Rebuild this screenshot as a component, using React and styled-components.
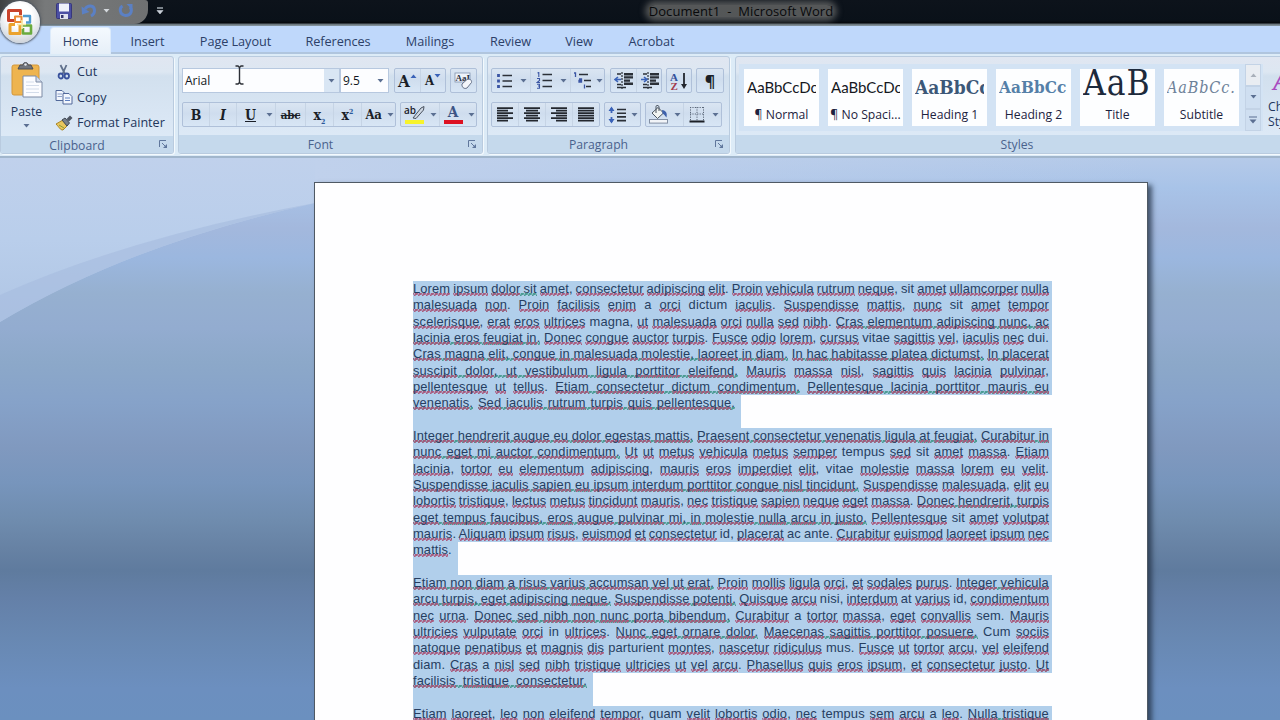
import React from 'react';
import styled, { createGlobalStyle, css } from 'styled-components';

const GlobalStyle = createGlobalStyle`
  * {
    box-sizing: border-box;
  }

  body {
    margin: 0;
    overflow: hidden;
    font-family: "Open Sans", "Noto Sans", sans-serif;
  }
`;

const Window = styled.div`
  position: relative;
  display: flex;
  flex-direction: column;
  width: 1280px;
  height: 720px;
  overflow: hidden;
`;

/* ---------- title bar ---------- */

const TitleBar = styled.header`
  display: flex;
  flex: none;
  height: 26px;
  background: linear-gradient(#0d131b, #0a1119 80%, #05080c 88%, #657178 93%, #8c9ba5);
`;

const QuickAccess = styled.div`
  display: flex;
  align-items: center;
  width: 148px;
  height: 24px;
  padding: 0 0 3px 53px;
  background: linear-gradient(90deg, #3f4142, #77797a 45px, #6f7172);
  border-radius: 0 3px 14px 0;
`;

const QuickItem = styled.span`
  display: flex;
  justify-content: center;
  width: ${(props) => props.$w}px;
`;

const TitleText = styled.div`
  flex: 1;
  padding-left: 30px;
  color: #08090b;
  font-size: 13px;
  line-height: 23px;
  text-align: center;
  white-space: pre;
  letter-spacing: 0.08px;

  span {
    background: rgba(125, 125, 122, 0.65);
    border-radius: 8px;
    box-shadow: 0 0 6px 4px rgba(125, 125, 122, 0.65);
    line-height: 12px;
    display: inline-block;
  }
`;

const OfficeButton = styled.div`
  position: absolute;
  left: 0;
  top: 1px;
  width: 40px;
  height: 42px;
  display: flex;
  align-items: center;
  justify-content: center;
  border-radius: 50%;
  background: radial-gradient(circle at 50% 35%, #ffffff 35%, #dfe3e8 65%, #b9c0c8);
  box-shadow: 0 0 2px 1px #4c5560;
`;

/* ---------- tabs ---------- */

const TabStrip = styled.nav`
  display: flex;
  flex: none;
  height: 28px;
  padding: 1px 0 0 50px;
  background: #bfd8fb;
  border-bottom: 2px solid #b0c5de;
`;

const Tab = styled.div`
  width: ${(props) => props.$w}px;
  height: 27px;
  padding-top: 1px;
  color: #2c4068;
  font-size: 12.7px;
  line-height: 26px;
  text-align: center;
  letter-spacing: -0.05px;

  ${(props) =>
    props.$active &&
    css`
      background: linear-gradient(#f4f9fe, #e6eff8);
      border: 1px solid #dcebfb;
      border-bottom: 0;
      border-radius: 4px 4px 0 0;
      padding-top: 0;
    `}
`;

/* ---------- ribbon ---------- */

const Ribbon = styled.section`
  display: flex;
  flex: none;
  gap: 4px;
  height: 104px;
  padding-top: 2px;
  background: #dcebf7;
  border-bottom: 2px solid #a1b6cc;
`;

const Group = styled.div`
  display: flex;
  flex-direction: column;
  flex: none;
  width: ${(props) => props.$w}px;
  height: 98px;
  margin-right: ${(props) => props.$mr || 0}px;
  border: 1px solid #b9cbdf;
  border-radius: 3px;
  background: linear-gradient(#e0e6f1, #dde7f2 15px, #d2e0ee 19px, #d9e6f4 60px, #e0ecf8);
  box-shadow: 1px 1px 0 #f3f9fd;
  overflow: hidden;
`;

const GroupBody = styled.div`
  display: flex;
  flex-direction: ${(props) => (props.$column ? 'column' : 'row')};
  height: 79px;
`;

const GroupLabel = styled.div`
  display: flex;
  align-items: center;
  height: 18px;
  background: #c5d9ec;
  color: #4a628c;
  font-size: 12.2px;
  line-height: 17px;
  text-align: center;

  span {
    flex: 1;
    padding-top: 1px;
  }

  svg {
    margin: 0 5px 0 6px;
  }
`;

const PasteButton = styled.div`
  display: flex;
  flex-direction: column;
  align-items: center;
  width: 51px;
  padding-top: 5px;
  color: #22365c;
  font-size: 12.3px;
  line-height: 16px;

  svg + span {
    margin-top: 6px;
  }

  span + svg {
    margin-top: 4px;
  }
`;

const ClipList = styled.div`
  display: flex;
  flex-direction: column;
  padding: 2px 0 0 3px;
`;

const ClipItem = styled.div`
  display: flex;
  align-items: center;
  height: 25.5px;
  gap: 4px;
  color: #22365c;
  font-size: 12.6px;
  white-space: nowrap;

  svg {
    width: 18px;
  }
`;

const ToolRow = styled.div`
  display: flex;
  height: 25px;
  margin: ${(props) => props.$m};
`;

const ToolBox = styled.div`
  display: flex;
  align-items: center;
  height: 25px;
  margin-right: ${(props) => props.$mr || 0}px;
  border: 1px solid #afc0d9;
  border-radius: 2px;
  background: linear-gradient(#dae5f2, #cfddee 45%, #d8e6f5);
`;

const Tool = styled.span`
  display: flex;
  flex: none;
  align-items: center;
  justify-content: center;
  width: ${(props) => props.$w}px;
  height: 23px;
  border-left: ${(props) => (props.$line ? '1px solid #c6d4e5' : '0')};
`;

const Raised = styled.span`
  display: flex;
  align-self: flex-start;
  margin-top: 5px;
`;

const Glyph = styled.span`
  color: ${(props) => props.$color || '#1b1f28'};
  font-family: ${(props) => (props.$sans ? '"Open Sans", sans-serif' : '"DejaVu Serif Condensed", "DejaVu Serif", serif')};
  font-size: ${(props) => props.$size || 14}px;
  font-weight: ${(props) => props.$weight || 700};
  font-style: ${(props) => (props.$italic ? 'italic' : 'normal')};
  text-decoration: ${(props) => props.$deco || 'none'};
  line-height: 18px;
  letter-spacing: ${(props) => props.$ls || 0}px;

  sub,
  sup {
    color: #2c5a9b;
    font-size: 7px;
    line-height: 0;
  }
`;

const Swatch = styled.span`
  display: flex;
  flex-direction: column;
  align-items: center;
  height: 19px;
  width: 19px;
  border-bottom: 4px solid ${(props) => props.$color};

  ${Glyph} {
    line-height: 14px;
  }
`;

const Field = styled.div`
  display: flex;
  align-items: center;
  justify-content: space-between;
  width: ${(props) => props.$w}px;
  height: 25px;
  padding-left: 2px;
  background: #fcfdff;
  border: 1px solid #b7c8df;
  color: #111722;
  font-size: 12px;
`;

const FieldArrow = styled.span`
  display: flex;
  align-items: center;
  justify-content: center;
  width: 15px;
  height: 23px;
  background: ${(props) => (props.$tint ? '#d9e6f4' : 'transparent')};
`;

/* ---------- styles gallery ---------- */

const Gallery = styled.div`
  display: flex;
  flex: none;
  gap: 9px;
  width: 524px;
  height: 67px;
  margin: 7px 0 0 3px;
  padding: 5px 0 5px 5px;
  background: #d3e3f4;
`;

const StyleCard = styled.div`
  display: flex;
  flex-direction: column;
  flex: none;
  width: 75px;
  height: 57px;
  background: #fdfeff;
  overflow: hidden;
`;

const Preview = styled.div`
  display: flex;
  align-items: center;
  height: 37px;
  margin: 0 3px;
  padding-bottom: ${(props) => props.$lift || 0}px;
  overflow: hidden;
  white-space: nowrap;
  color: ${(props) => props.$color};
  font-family: ${(props) => props.$font};
  font-size: ${(props) => props.$size}px;
  font-weight: ${(props) => props.$weight || 400};
  font-style: ${(props) => (props.$italic ? 'italic' : 'normal')};
  letter-spacing: ${(props) => props.$ls || 0}px;
  line-height: 37px;
`;

const StyleName = styled.div`
  margin-top: 1px;
  color: #1d2340;
  font-size: 12.2px;
  line-height: 16px;
  text-align: center;
  white-space: nowrap;
`;

const GalleryScroll = styled.div`
  display: flex;
  flex-direction: column;
  width: 16px;
  height: 67px;
  margin: -5px 0 0 -3px;
`;

const ScrollCell = styled.div`
  display: flex;
  align-items: center;
  justify-content: center;
  flex: 1;
  background: ${(props) => (props.$off ? '#e9edf2' : '#cfdff1')};
  border: 1px solid #c3d3e6;
`;

const ChangeStyles = styled.div`
  display: flex;
  flex-direction: column;
  width: 60px;
  padding: 12px 0 0 5px;
  color: #22365c;
  font-size: 12.2px;
  line-height: 15px;

  b {
    padding: 0 0 6px 5px;
    color: #a94cc0;
    font-family: "Liberation Serif", serif;
    font-size: 27px;
    font-style: italic;
    line-height: 24px;
  }
`;

/* ---------- document ---------- */

const Workspace = styled.main`
  position: relative;
  display: flex;
  flex: 1;
  padding: 24px 0 0 314px;
  overflow: hidden;
  background: linear-gradient(
    #b5cae9 0,
    #a8c3e8 30px,
    #a3b8dd 70px,
    #9bb7df 100px,
    #96b0d0 135px,
    #93acd0 170px,
    #8ca8c9 205px,
    #86a2c9 245px,
    #8099bf 290px,
    #7795bc 325px,
    #6f8cae 362px,
    #6782a4 390px,
    #5f7b9e 412px,
    #6480a8 440px,
    #6888b2 480px,
    #6c8fbf 530px,
    #6b90bf 562px
  );
`;

const Sweep = styled.svg`
  position: absolute;
  left: 0;
  top: 0;
`;

const Page = styled.article`
  position: relative;
  width: 834px;
  height: 560px;
  padding: 98px 0 0 98px;
  background: #fefeff;
  border: 1px solid #4f5964;
  border-bottom: 0;
  box-shadow: 4px 3px 5px rgba(35, 50, 70, 0.75);
`;

const Line = styled.div`
  width: ${(props) => props.$w + 3}px;
  height: ${(props) => (props.$last ? 32.66 : 16.33)}px;
  padding-right: ${(props) => (props.$last ? 6 : 3)}px;
  background: #b1cfeb;
  color: #263e61;
  font-family: "Liberation Sans", Arial, sans-serif;
  font-size: 12.9px;
  letter-spacing: 0.12px;
  line-height: 16.33px;
  text-align: justify;
  text-align-last: justify;
  white-space: nowrap;
  word-spacing: -3.2px;
`;

/* zigzag drawn with four diagonal strokes */
const squiggle = (color) => css`
  background-image: linear-gradient(45deg, transparent 62%, ${color} 72%, transparent 92%),
    linear-gradient(135deg, transparent 8%, ${color} 18%, transparent 32%),
    linear-gradient(135deg, transparent 45%, ${color} 58%, transparent 70%),
    linear-gradient(45deg, transparent 22%, ${color} 36%, transparent 52%);
  background-size: 4px 3px;
  background-repeat: repeat-x;
  background-position: 0 100%;
`;

const Spelling = styled.span`
  ${squiggle('#a8567a')}
`;

const Grammar = styled.span`
  ${squiggle('#46998f')}
`;

/* ---------- icons ---------- */

const Arrow = ({ up, color = '#5b6f92' }) => (
  <svg width="7" height="4" viewBox="0 0 7 4">
    <path d={up ? 'M0.5 4L3.5 0.5L6.5 4Z' : 'M0.5 0L3.5 3.5L6.5 0Z'} fill={color} />
  </svg>
);

const Launcher = () => (
  <svg width="9" height="9" viewBox="0 0 9 9" fill="none" stroke="#60779c">
    <path d="M0.5 7V0.5H7" />
    <path d="M3 3L7 7" />
    <path d="M8 4V8H4Z" fill="#60779c" stroke="none" />
  </svg>
);

const OfficeLogo = () => (
  <svg width="28" height="28" viewBox="0 0 28 28" fill="none" strokeWidth="3" strokeLinejoin="round">
    <path d="M14.5 7V2.5H2.5V12.5H8" stroke="#c9432c" />
    <path d="M17 8H24V14.5H20" stroke="#4f9bd0" strokeWidth="2.4" />
    <path d="M14 17V25.5H4V16.5H9" stroke="#eba22d" />
    <path d="M15 17.5H25V25.5H17V20" stroke="#6aab3e" strokeWidth="2.6" />
    <path d="M9 14V8.5H15.5V14Z" stroke="#ec8b35" strokeWidth="2" />
    <path d="M11 16.5H20M16 12V21" stroke="#f8e9a4" strokeWidth="1.6" />
  </svg>
);

const SaveIcon = () => (
  <svg width="16" height="16" viewBox="0 0 16 16">
    <rect x="0.5" y="0.5" width="15" height="15" rx="1" fill="#4b4fa3" stroke="#37377d" />
    <rect x="3" y="0.5" width="10" height="8" fill="#eef1fb" />
    <rect x="4" y="11" width="8" height="5" fill="#dfe2ee" />
    <rect x="5" y="12" width="2.5" height="3" fill="#35366e" />
  </svg>
);

const UndoIcon = () => (
  <svg width="16" height="15" viewBox="0 0 16 15" fill="none">
    <path d="M4 6C7 1.5 13 2 13.5 7C13.7 10 12 12 10 13" stroke="#5b80c4" strokeWidth="3" />
    <path d="M0.5 3.5L1 11.5L8.5 9Z" fill="#5b80c4" />
  </svg>
);

const RepeatIcon = () => (
  <svg width="16" height="15" viewBox="0 0 16 15" fill="none">
    <path d="M4.5 3C1 5 1.5 12 7.5 12.5C13.5 12.5 14.5 7 12 4" stroke="#5b80c4" strokeWidth="3" />
    <path d="M8.5 1H14.5V7Z" fill="#5b80c4" />
  </svg>
);

const PasteIcon = () => (
  <svg width="32" height="36" viewBox="0 0 32 36">
    <rect x="1" y="3" width="27" height="30" rx="2" fill="#eeb44f" stroke="#d4973a" />
    <path d="M7 7L9 3H12C12 -0.5 17 -0.5 17 3H20L22 7Z" fill="#70747c" stroke="#4a4d55" />
    <circle cx="14.5" cy="2.6" r="1.2" fill="#e8ebf0" />
    <path d="M12 14H25L31 20V35H12Z" fill="#fbfcff" stroke="#7c8ba5" />
    <path d="M25 14V20H31" fill="#d3dceb" stroke="#7c8ba5" />
    <path d="M15 20H23M15 23.5H28M15 27H28M15 30.5H28" stroke="#d3dcea" />
  </svg>
);

const CutIcon = () => (
  <svg width="16" height="16" viewBox="0 0 16 16" fill="none">
    <path d="M4.5 1L9 10M10.5 1L6.5 10" stroke="#60708c" strokeWidth="1.8" />
    <ellipse cx="4.8" cy="12" rx="2.2" ry="2.5" stroke="#39519c" strokeWidth="1.8" />
    <ellipse cx="10.8" cy="12" rx="2.2" ry="2.5" stroke="#39519c" strokeWidth="1.8" />
  </svg>
);

const CopyIcon = () => (
  <svg width="18" height="16" viewBox="0 0 18 16" fill="#f2f6fd" stroke="#52699a">
    <path d="M1 1.5H7L10 4.5V11.5H1Z" />
    <path d="M2.5 5H7M2.5 7.5H7" stroke="#8ca0c8" />
    <path d="M8 4.5H14L17 7.5V15H8Z" />
    <path d="M10 9H15M10 11.5H15" stroke="#5f80c0" />
  </svg>
);

const BrushIcon = () => (
  <svg width="18" height="16" viewBox="0 0 18 16">
    <path d="M1 9L8 5L13 10L8 15C5 15 4.5 12.5 1 9Z" fill="#e9c65c" stroke="#a98527" />
    <path d="M7 5L10 3L14.5 8L12 11Z" fill="#77808c" stroke="#3f4854" />
    <path d="M11.5 4L15 0.5L17.5 3L14 6.5Z" fill="#4e5663" />
    <path d="M4 10L9 13" stroke="#8b9a34" />
  </svg>
);

const EraserIcon = () => (
  <svg width="20" height="20" viewBox="0 0 20 20">
    <rect x="1" y="2" width="15" height="9" fill="#eef3fa" stroke="#8293ae" strokeWidth="0.8" />
    <text x="1.5" y="9.5" fontFamily="Liberation Serif" fontWeight="700" fontSize="9" fill="#2a3140">AaI</text>
    <path d="M8 13L13 8.5C16 7.5 18 9 17.5 11.5L13 17C10 18.5 7.5 16 8 13Z" fill="#f4f6fa" stroke="#68738a" />
  </svg>
);

const PenIcon = () => (
  <svg width="21" height="15" viewBox="0 0 21 15">
    <text x="0" y="9" fontFamily="Open Sans" fontWeight="600" fontSize="10" fill="#1d222c">ab</text>
    <path d="M9 13L17 3L20 1.5L19.5 5L12 13.5Z" fill="#cfd7e3" stroke="#49525f" />
  </svg>
);

const BulletsIcon = () => (
  <svg width="17" height="16" viewBox="0 0 17 16">
    <path d="M6.5 2.5H16M6.5 8H16M6.5 13.5H16" stroke="#2b3038" strokeWidth="1.7" />
    <path d="M2.5 1V4M2.5 6.5V9.5M2.5 12V15" stroke="#3a55a4" strokeWidth="2.8" />
  </svg>
);

const NumberIcon = () => (
  <svg width="17" height="17" viewBox="0 0 17 17">
    <path d="M6.5 2.5H16M6.5 8.5H16M6.5 14.5H16" stroke="#2b3038" strokeWidth="1.7" />
    <path
      d="M1.5 1L2.8 0.5V5M1 6.5H3.5V8.5L1.2 10.5H4M1 12.2H3.5V14H2M3.5 14V16.3H1"
      fill="none"
      stroke="#3a55a4"
      strokeWidth="1.1"
    />
  </svg>
);

const MultilevelIcon = () => (
  <svg width="20" height="18" viewBox="0 0 20 18">
    <path d="M6 2.5H15M11 8.5H18M13 14.5H18" stroke="#2b3038" strokeWidth="1.7" />
    <path
      d="M1 1H2.5V5M6 7H8.5V10H6V8.5H8M11.5 12.5V16.5"
      fill="none"
      stroke="#3a55a4"
      strokeWidth="1.3"
    />
  </svg>
);

const IndentIcon = ({ right }) => (
  <svg width="19" height="17" viewBox="0 0 19 17">
    <path d="M8 0V17" stroke="#2b3038" strokeWidth="1.2" strokeDasharray="2 1" />
    <path d="M10 2.2H19M10 5.4H19M10 8.6H16M10 11.8H19" stroke="#2b3038" strokeWidth="2.4" />
    <path d="M3 2H7M3 12.5H7M3 15.5H12" stroke="#2b3038" strokeWidth="1.3" />
    <path d={right ? 'M1 7.5H6M4 5L7 7.5L4 10' : 'M7 7.5H2M4 5L1 7.5L4 10'} fill="none" stroke="#3a62b8" strokeWidth="1.6" />
  </svg>
);

const SortIcon = () => (
  <svg width="20" height="20" viewBox="0 0 20 20">
    <text x="1" y="9.5" fontFamily="Liberation Serif" fontWeight="700" fontSize="11" fill="#32509b">A</text>
    <text x="1.5" y="19" fontFamily="Liberation Serif" fontWeight="700" fontSize="11" fill="#a23a4c">Z</text>
    <path d="M15 2V15" stroke="#22262e" strokeWidth="1.8" />
    <path d="M12 13H18L15 18Z" fill="#22262e" />
  </svg>
);

const AlignIcon = ({ rows }) => (
  <svg width="17" height="15" viewBox="0 0 17 15">
    {rows.map(([from, to], i) => (
      <path key={i} d={`M${from} ${1.2 + i * 2.5}H${to}`} stroke="#23272e" strokeWidth="1.8" />
    ))}
  </svg>
);

const SpacingIcon = () => (
  <svg width="19" height="18" viewBox="0 0 19 18">
    <path d="M9 3.5H18M9 7.2H18M9 10.9H18M9 14.6H18" stroke="#2b3038" strokeWidth="1.6" />
    <path d="M3.5 2V7M3.5 11V16" stroke="#3a62b8" strokeWidth="1.8" />
    <path d="M0.5 5L3.5 0.5L6.5 5ZM0.5 13L3.5 17.5L6.5 13Z" fill="#3a62b8" />
  </svg>
);

const BucketIcon = () => (
  <svg width="20" height="19" viewBox="0 0 20 19">
    <path d="M3 8L9 2.5L14.5 8L8.5 13.5Z" fill="#f2f5f2" stroke="#4b5560" />
    <path d="M7 8V1.5C7 0 10 0 10 2V6" fill="none" stroke="#4b5560" />
    <path d="M13 5C17 5.5 18.5 8 17.5 12.5C16 11.5 16 9.5 13.5 8.5Z" fill="#3e61ab" />
    <rect x="0.5" y="14.5" width="18" height="3.6" fill="#f1f4f8" stroke="#8390a4" />
  </svg>
);

const BorderIcon = () => (
  <svg width="16" height="17" viewBox="0 0 16 17">
    <path d="M1 1.5H15M1 8H15M1.5 1V15M8 1V15M14.5 1V15" stroke="#5b6779" strokeDasharray="1.2 1.2" />
    <path d="M0.5 15.5H15.5" stroke="#1b1f26" strokeWidth="1.8" />
  </svg>
);

const Cursor = styled.svg`
  position: absolute;
  left: 234px;
  top: 65px;
`;

/* ---------- data ---------- */

const TABS = [
  ['Home', 61],
  ['Insert', 73],
  ['Page Layout', 103],
  ['References', 102],
  ['Mailings', 82],
  ['Review', 79],
  ['View', 58],
  ['Acrobat', 87],
];

const LEFT = [[0, 16], [0, 11], [0, 16], [0, 11], [0, 16], [0, 11]];
const CENTER = [[0, 16], [2, 14], [0, 16], [2, 14], [0, 16], [2, 14]];
const RIGHT = [[0, 16], [5, 16], [0, 16], [5, 16], [0, 16], [5, 16]];
const FULL = [[0, 16], [0, 16], [0, 16], [0, 16], [0, 16], [0, 16]];

const SANS = 'Lato, "Open Sans", sans-serif';
const SERIF = '"DejaVu Serif Condensed", "DejaVu Serif", serif';

const STYLES = [
  { name: '¶ Normal', text: 'AaBbCcDc', color: '#15181e', font: SANS, size: 15 },
  { name: '¶ No Spaci...', text: 'AaBbCcDc', color: '#15181e', font: SANS, size: 15 },
  { name: 'Heading 1', text: 'AaBbCc', color: '#3c5878', font: SERIF, size: 19, weight: 700 },
  { name: 'Heading 2', text: 'AaBbCc', color: '#5580a8', font: SERIF, size: 17, weight: 700, ls: 0.1 },
  { name: 'Title', text: 'AaB', color: '#1d2a3c', font: SERIF, size: 35, ls: 1, lift: 8 },
  { name: 'Subtitle', text: 'AaBbCc.', color: '#6e8299', font: SERIF, size: 16, italic: true, ls: 0.9 },
];

// "[...]" is a grammar run, "_" marks a word that is spelled correctly
const PARAGRAPHS = [
  {
    lastWidth: 325,
    lines: [
      'Lorem ipsum [dolor _sit] amet, consectetur adipiscing elit. Proin vehicula rutrum neque, _sit amet ullamcorper nulla',
      'malesuada [non]. Proin facilisis enim _a orci _dictum iaculis. Suspendisse mattis, nunc _sit amet tempor',
      'scelerisque, erat eros ultrices _magna, ut malesuada orci nulla sed nibh. [Cras elementum adipiscing nunc, ac]',
      '[lacinia eros feugiat in.] Donec congue auctor turpis. Fusce odio lorem, cursus _vitae sagittis vel, iaculis nec _dui.',
      '[Cras magna elit, congue in malesuada molestie, laoreet in diam.] [In hac habitasse platea dictumst.] [In placerat]',
      '[suscipit dolor, ut vestibulum ligula porttitor eleifend.] Mauris massa nisl, sagittis quis lacinia pulvinar,',
      'pellentesque ut tellus. [Etiam consectetur dictum condimentum.] [Pellentesque lacinia porttitor mauris eu]',
      '[venenatis.] [Sed iaculis rutrum turpis quis pellentesque.]',
    ],
  },
  {
    lastWidth: 42,
    lines: [
      '[Integer hendrerit augue eu dolor egestas mattis.] [Praesent consectetur venenatis ligula at feugiat.] [Curabitur in]',
      '[nunc eget mi auctor condimentum.] Ut ut metus vehicula metus semper _tempus sed _sit amet massa. Etiam',
      'lacinia, tortor eu elementum adipiscing, mauris eros imperdiet elit, _vitae molestie massa lorem eu velit.',
      '[Suspendisse iaculis sapien eu ipsum interdum porttitor congue nisl tincidunt.] Suspendisse malesuada, elit eu',
      'lobortis tristique, lectus metus tincidunt mauris, nec tristique sapien neque eget massa. [Donec hendrerit, turpis]',
      '[eget tempus faucibus, eros augue pulvinar mi, in molestie nulla arcu in justo.] Pellentesque _sit amet volutpat',
      'mauris. Aliquam ipsum risus, euismod [et] consectetur _id, placerat _ac _ante. Curabitur euismod laoreet ipsum nec',
      'mattis.',
    ],
  },
  {
    lastWidth: 177,
    lines: [
      '[Etiam non diam a risus varius accumsan vel ut erat.] Proin mollis ligula orci, [et] sodales purus. [Integer vehicula]',
      '[arcu turpis, eget adipiscing neque.] [Suspendisse potenti.] Quisque arcu _nisi, interdum _at varius _id, condimentum',
      'nec urna. [Donec sed nibh non nunc porta bibendum.] Curabitur _a tortor massa, eget convallis _sem. Mauris',
      'ultricies vulputate orci _in ultrices. [Nunc eget ornare dolor.] [Maecenas sagittis porttitor posuere.] _Cum sociis',
      'natoque penatibus [et] magnis dis _parturient montes, nascetur ridiculus _mus. Fusce ut tortor arcu, vel eleifend',
      '_diam. Cras _a nisl sed nibh tristique ultricies ut vel arcu. Phasellus quis eros ipsum, [et] consectetur justo. [Ut]',
      '[facilisis tristique consectetur.]',
    ],
  },
  {
    lines: [
      'Etiam laoreet, leo non eleifend tempor, _quam velit lobortis odio, nec _tempus sem arcu _a leo. [Nulla tristique]',
    ],
  },
];

const markWords = (text) =>
  text.split(/(_?[A-Za-z]+)/).map((part, i) => {
    if (part.startsWith('_')) return part.slice(1);
    if (/[A-Za-z]/.test(part)) return <Spelling key={i}>{part}</Spelling>;
    return part;
  });

const renderLine = (line) =>
  line.split(/(\[[^\]]+\])/).map((run, i) =>
    run.startsWith('[') ? (
      <Grammar key={i}>{markWords(run.slice(1, -1))}</Grammar>
    ) : (
      <React.Fragment key={i}>{markWords(run)}</React.Fragment>
    )
  );

/* ---------- groups ---------- */

function ClipboardGroup() {
  return (
    <Group $w={174}>
      <GroupBody>
        <PasteButton>
          <PasteIcon />
          <span>Paste</span>
          <Arrow />
        </PasteButton>
        <ClipList>
          <ClipItem><CutIcon />Cut</ClipItem>
          <ClipItem><CopyIcon />Copy</ClipItem>
          <ClipItem><BrushIcon />Format Painter</ClipItem>
        </ClipList>
      </GroupBody>
      <GroupLabel><span>Clipboard</span><Launcher /></GroupLabel>
    </Group>
  );
}

function FontGroup() {
  return (
    <Group $w={305}>
      <GroupBody $column>
        <ToolRow $m="11px 0 0 3px">
          <Field $w={158}>Arial<FieldArrow $tint><Arrow /></FieldArrow></Field>
          <Field $w={49}>9.5<FieldArrow><Arrow /></FieldArrow></Field>
          <Tool $w={5} />
          <ToolBox $mr={4}>
            <Tool $w={25}><Glyph $size={17}>A</Glyph><Raised><Arrow up color="#3a62b8" /></Raised></Tool>
            <Tool $w={25} $line><Glyph $size={13}>A</Glyph><Raised><Arrow color="#3a62b8" /></Raised></Tool>
          </ToolBox>
          <ToolBox><Tool $w={25}><EraserIcon /></Tool></ToolBox>
        </ToolRow>
        <ToolRow $m="9px 0 0 3px">
          <ToolBox $mr={4}>
            <Tool $w={26}><Glyph>B</Glyph></Tool>
            <Tool $w={27} $line><Glyph $italic>I</Glyph></Tool>
            <Tool $w={28} $line><Glyph $deco="underline">U</Glyph></Tool>
            <Tool $w={11}><Arrow /></Tool>
            <Tool $w={30} $line><Glyph $size={11.5} $deco="line-through" $ls={-0.2}>abc</Glyph></Tool>
            <Tool $w={28} $line><Glyph $size={14}>x<sub>2</sub></Glyph></Tool>
            <Tool $w={28} $line><Glyph $size={14}>x<sup>2</sup></Glyph></Tool>
            <Tool $w={24} $line><Glyph $size={13} $ls={-0.4}>Aa</Glyph></Tool>
            <Tool $w={10}><Arrow /></Tool>
          </ToolBox>
          <ToolBox>
            <Tool $w={26}><Swatch $color="#f7f32c"><PenIcon /></Swatch></Tool>
            <Tool $w={12}><Arrow /></Tool>
            <Tool $w={27} $line><Swatch $color="#dd1122"><Glyph $color="#3d5585" $size={15}>A</Glyph></Swatch></Tool>
            <Tool $w={10}><Arrow /></Tool>
          </ToolBox>
        </ToolRow>
      </GroupBody>
      <GroupLabel><span>Font</span><Launcher /></GroupLabel>
    </Group>
  );
}

function ParagraphGroup() {
  return (
    <Group $w={243} $mr={1}>
      <GroupBody $column>
        <ToolRow $m="11px 0 0 3px">
          <ToolBox $mr={5}>
            <Tool $w={25}><BulletsIcon /></Tool>
            <Tool $w={13}><Arrow /></Tool>
            <Tool $w={27} $line><NumberIcon /></Tool>
            <Tool $w={13}><Arrow /></Tool>
            <Tool $w={24} $line><MultilevelIcon /></Tool>
            <Tool $w={10}><Arrow /></Tool>
          </ToolBox>
          <ToolBox $mr={4}>
            <Tool $w={25}><IndentIcon /></Tool>
            <Tool $w={25} $line><IndentIcon right /></Tool>
          </ToolBox>
          <ToolBox $mr={4}><Tool $w={24}><SortIcon /></Tool></ToolBox>
          <ToolBox><Tool $w={26}><Glyph $size={16} $sans>¶</Glyph></Tool></ToolBox>
        </ToolRow>
        <ToolRow $m="9px 0 0 3px">
          <ToolBox $mr={4}>
            <Tool $w={26}><AlignIcon rows={LEFT} /></Tool>
            <Tool $w={27} $line><AlignIcon rows={CENTER} /></Tool>
            <Tool $w={27} $line><AlignIcon rows={RIGHT} /></Tool>
            <Tool $w={27} $line><AlignIcon rows={FULL} /></Tool>
          </ToolBox>
          <ToolBox $mr={4}>
            <Tool $w={24}><SpacingIcon /></Tool>
            <Tool $w={11}><Arrow /></Tool>
          </ToolBox>
          <ToolBox>
            <Tool $w={25}><BucketIcon /></Tool>
            <Tool $w={12}><Arrow /></Tool>
            <Tool $w={26} $line><BorderIcon /></Tool>
            <Tool $w={12}><Arrow /></Tool>
          </ToolBox>
        </ToolRow>
      </GroupBody>
      <GroupLabel><span>Paragraph</span><Launcher /></GroupLabel>
    </Group>
  );
}

function StylesGroup() {
  return (
    <Group $w={564}>
      <GroupBody>
        <Gallery>
          {STYLES.map((s) => (
            <StyleCard key={s.name}>
              <Preview
                $color={s.color}
                $font={s.font}
                $size={s.size}
                $weight={s.weight}
                $italic={s.italic}
                $ls={s.ls}
                $lift={s.lift}
              >
                {s.text}
              </Preview>
              <StyleName>{s.name}</StyleName>
            </StyleCard>
          ))}
          <GalleryScroll>
            <ScrollCell $off><Arrow up color="#a9b0ba" /></ScrollCell>
            <ScrollCell><Arrow /></ScrollCell>
            <ScrollCell>
              <svg width="8" height="8" viewBox="0 0 8 8">
                <path d="M0 1H8" stroke="#5b6f92" strokeWidth="1.2" />
                <path d="M0.5 3.5H7.5L4 7.5Z" fill="#5b6f92" />
              </svg>
            </ScrollCell>
          </GalleryScroll>
        </Gallery>
        <ChangeStyles>
          <b>A</b>
          <span>Change</span>
          <span>Styles</span>
        </ChangeStyles>
      </GroupBody>
      <GroupLabel><span>Styles</span></GroupLabel>
    </Group>
  );
}

function App() {
  return (
    <Window>
      <GlobalStyle />
      <TitleBar>
        <QuickAccess>
          <QuickItem $w={22}><SaveIcon /></QuickItem>
          <QuickItem $w={27}><UndoIcon /></QuickItem>
          <QuickItem $w={8}><Arrow color="#d5d9de" /></QuickItem>
          <QuickItem $w={32}><RepeatIcon /></QuickItem>
        </QuickAccess>
        <QuickItem $w={24}>
          <svg width="8" height="20" viewBox="0 0 8 20">
            <path d="M1 8H7" stroke="#c9d0d8" strokeWidth="1.2" />
            <path d="M1 10.5H7L4 14Z" fill="#c9d0d8" stroke="#c9d0d8" strokeWidth="0.6" />
          </svg>
        </QuickItem>
        <TitleText><span>Document1  -  Microsoft Word</span></TitleText>
      </TitleBar>

      <TabStrip>
        {TABS.map(([label, width], i) => (
          <Tab key={label} $w={width} $active={i === 0}>{label}</Tab>
        ))}
      </TabStrip>

      <Ribbon>
        <ClipboardGroup />
        <FontGroup />
        <ParagraphGroup />
        <StylesGroup />
      </Ribbon>

      <Workspace>
        <Sweep width="1280" height="562" viewBox="0 0 1280 562">
          <defs>
            <linearGradient id="glow" x1="0" y1="0" x2="0" y2="1">
              <stop offset="0" stopColor="#c0d1ec" />
              <stop offset="0.5" stopColor="#b9ceeb" />
              <stop offset="1" stopColor="#afc5e4" />
            </linearGradient>
            <linearGradient id="fade" x1="0" y1="0" x2="1" y2="0">
              <stop offset="0" stopColor="#c0d1ec" stopOpacity="1" />
              <stop offset="1" stopColor="#c0d1ec" stopOpacity="0" />
            </linearGradient>
          </defs>
          <path d="M0 0H315V45Q130 86 0 164Z" fill="url(#glow)" />
          <path d="M315 45Q130 79 0 137V164Q130 86 315 45Z" fill="#a8bedf" opacity="0.7" />
          <path d="M315 0H1148V24H315Z" fill="url(#fade)" />
        </Sweep>
        <Page>
          {PARAGRAPHS.map((paragraph) =>
            paragraph.lines.map((line, i) => {
              const last = paragraph.lastWidth && i === paragraph.lines.length - 1;
              return (
                <Line key={line} $last={last} $w={last ? paragraph.lastWidth : 636}>
                  {renderLine(line)}
                </Line>
              );
            })
          )}
        </Page>
      </Workspace>

      <OfficeButton><OfficeLogo /></OfficeButton>
      <Cursor width="11" height="20" viewBox="0 0 11 20" fill="none" stroke="#2b2f36" strokeWidth="1.4">
        <path d="M1.5 1H4L5.5 2.5L7 1H9.5M5.5 2.5V17.5M1.5 19H4L5.5 17.5L7 19H9.5" />
      </Cursor>
    </Window>
  );
}

export default App;
